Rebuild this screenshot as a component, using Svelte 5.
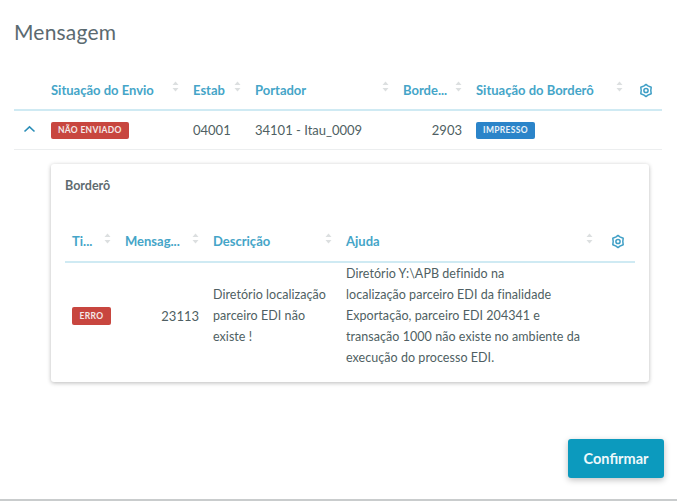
<script>
  const outerCols = [
    { label: 'Situação do Envio', sort: true },
    { label: 'Estab', sort: true },
    { label: 'Portador', sort: true },
    { label: 'Borde...', sort: true },
    { label: 'Situação do Borderô', sort: true }
  ];
  const innerCols = ['Ti...', 'Mensag...', 'Descrição', 'Ajuda'];
  const ajuda = [
    'Diretório Y:\\APB definido na',
    'localização parceiro EDI da finalidade',
    'Exportação, parceiro EDI 204341 e',
    'transação 1000 não existe no ambiente da',
    'execução do processo EDI.'
  ];
  const descricao = ['Diretório localização', 'parceiro EDI não', 'existe !'];
</script>

{#snippet sorter()}
  <svg class="sorter" width="7" height="11" viewBox="0 0 7 11" aria-hidden="true">
    <path d="M3.5 0.5 L6.5 4 H0.5 Z" />
    <path d="M3.5 10.5 L0.5 7 H6.5 Z" />
  </svg>
{/snippet}

{#snippet gear()}
  <svg class="gear" width="14" height="15" viewBox="0 0 14 15" aria-hidden="true">
    <path d="M7 1.4 L8.9 2.9 L12.2 4.3 L11.8 7.5 L12.2 10.7 L8.9 12.1 L7 13.6 L5.1 12.1 L1.8 10.7 L2.2 7.5 L1.8 4.3 L5.1 2.9 Z" />
    <circle cx="7" cy="7.5" r="2.1" />
  </svg>
{/snippet}

<div class="modal">
  <h1>Mensagem</h1>

  <div class="table outer">
    <div class="row head">
      <div class="cell"></div>
      {#each outerCols as col}
        <div class="cell th">
          <span class="label">{col.label}</span>
          {@render sorter()}
        </div>
      {/each}
      <div class="cell gear-cell">{@render gear()}</div>
    </div>
    <div class="row body">
      <div class="cell chevron">
        <svg width="13" height="8" viewBox="0 0 13 8" aria-hidden="true">
          <path d="M1.5 6.5 L6.5 1.8 L11.5 6.5" />
        </svg>
      </div>
      <div class="cell"><span class="tag red wide">NÃO ENVIADO</span></div>
      <div class="cell">04001</div>
      <div class="cell">34101 - Itau_0009</div>
      <div class="cell num">2903</div>
      <div class="cell"><span class="tag blue">IMPRESSO</span></div>
      <div class="cell"></div>
    </div>
  </div>

  <section class="card">
    <h2>Borderô</h2>
    <div class="table inner">
      <div class="row head">
        {#each innerCols as label}
          <div class="cell th">
            <span class="label">{label}</span>
            {@render sorter()}
          </div>
        {/each}
        <div class="cell gear-cell">{@render gear()}</div>
      </div>
      <div class="row body">
        <div class="cell"><span class="tag red tall">ERRO</span></div>
        <div class="cell num">23113</div>
        <div class="cell lines">
          {#each descricao as line}<div>{line}</div>{/each}
        </div>
        <div class="cell lines">
          {#each ajuda as line}<div>{line}</div>{/each}
        </div>
        <div class="cell"></div>
      </div>
    </div>
  </section>

  <div class="actions">
    <button type="button">Confirmar</button>
  </div>
</div>

<style>
  :global(body) {
    margin: 0;
    background: #fff;
  }

  .modal {
    box-sizing: border-box;
    width: 677px;
    height: 501px;
    padding: 0 15px 0 14px;
    display: flex;
    flex-direction: column;
    border-bottom: 2px solid #c9cccd;
    font-family: Lato, "Open Sans", sans-serif;
    font-size: 13px;
    color: #4f5f63;
    overflow: hidden;
  }

  h1 {
    margin: 18px 0 0;
    height: 52px;
    font-size: 21px;
    line-height: 27px;
    font-weight: 400;
    color: #5b6a70;
    letter-spacing: 0.2px;
  }

  .row {
    display: grid;
    align-items: center;
    box-sizing: border-box;
  }

  .outer .row {
    grid-template-columns: 30px 142px 62px 148px 73px 161px 32px;
  }

  .inner .row {
    grid-template-columns: 53px 88px 133px 261px 36px;
  }

  .cell {
    box-sizing: border-box;
    padding: 0 7px;
    min-width: 0;
    white-space: nowrap;
  }

  .head {
    border-bottom: 2px solid #cfeaf3;
  }

  .outer .head {
    height: 41px;
  }

  .outer .head .cell {
    padding-top: 2px;
  }

  .outer .sorter {
    margin-top: -1px;
  }

  .outer .body {
    height: 39px;
    border-bottom: 1px solid #eceeef;
  }

  .th {
    display: flex;
    justify-content: space-between;
    align-items: flex-start;
    font-weight: 700;
    color: #45a5c8;
  }

  .sorter {
    fill: #dcdfe0;
    flex: none;
  }

  .label {
    line-height: 17px;
  }

  .gear-cell {
    display: flex;
    justify-content: center;
    padding: 0;
  }

  .gear {
    fill: none;
    stroke: #3f9fc6;
    stroke-width: 1.5;
    stroke-linejoin: round;
  }

  .chevron {
    display: flex;
    justify-content: center;
    padding: 0 0 3px;
  }

  .chevron path {
    fill: none;
    stroke: #2d8fb8;
    stroke-width: 1.6;
  }

  .num {
    text-align: right;
  }

  .tag {
    display: inline-block;
    box-sizing: border-box;
    height: 17px;
    padding: 0 7px;
    border-radius: 2px;
    font-size: 8.5px;
    font-weight: 700;
    line-height: 17px;
    letter-spacing: 0.3px;
    color: #f4e9e8;
    vertical-align: middle;
  }

  .wide {
    min-width: 77px;
    text-align: center;
  }

  .tall {
    height: 18px;
    line-height: 18px;
    min-width: 39px;
    text-align: center;
  }

  .red {
    background: #c8463f;
  }

  .blue {
    background: #2b84c9;
    color: #e8f1f8;
    min-width: 59px;
    text-align: center;
  }

  .card {
    box-sizing: border-box;
    width: 598px;
    height: 218px;
    margin: 14px 0 0 37px;
    padding: 0 14px;
    border-radius: 3px;
    box-shadow: 0 1px 4px rgba(0, 0, 0, 0.28);
    flex: none;
  }

  h2 {
    margin: 0;
    height: 47px;
    padding-top: 14px;
    box-sizing: border-box;
    font-size: 12.5px;
    line-height: 16px;
    font-weight: 700;
    color: #5f6b6f;
  }

  .inner .head {
    height: 52px;
  }

  .inner .head .cell {
    padding-top: 11px;
  }

  .lines {
    line-height: 21px;
    font-size: 12.5px;
    letter-spacing: 0.05px;
  }

  .actions {
    display: flex;
    justify-content: flex-end;
    margin: 57px -2px 0 0;
  }

  button {
    width: 96px;
    height: 39px;
    border: 0;
    border-radius: 3px;
    background: #0c9abe;
    color: #eef8fb;
    font: 700 14.5px Lato, "Open Sans", sans-serif;
    box-shadow: 0 2px 6px rgba(0, 0, 0, 0.25);
  }
</style>
